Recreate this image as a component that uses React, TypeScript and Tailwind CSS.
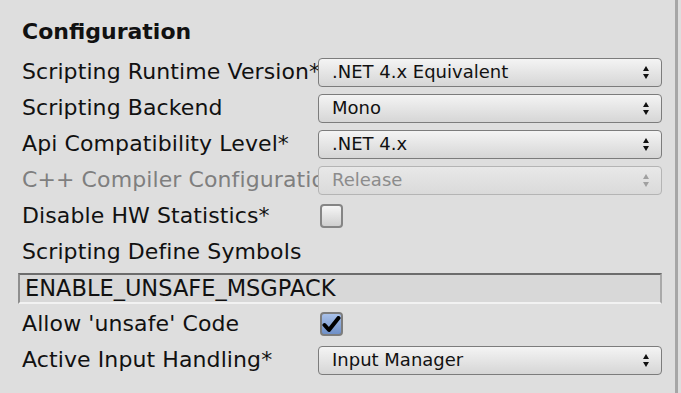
import React from "react";

const font = { fontFamily: '"DejaVu Sans", "Liberation Sans", sans-serif' };

function Arrows({ disabled }: { disabled?: boolean }) {
  const c = disabled ? "#a0a0a0" : "#111111";
  return (
    <svg width="6" height="13" viewBox="0 0 6 13" className="shrink-0">
      <path d="M3 0 L6 5 L0 5 Z" fill={c} />
      <path d="M0 8 L6 8 L3 13 Z" fill={c} />
    </svg>
  );
}

function Dropdown({ value, disabled }: { value: string; disabled?: boolean }) {
  return (
    <div
      className={
        "flex h-[29px] flex-1 items-center justify-between rounded-[4px] border pl-[13px] pr-[12px] text-[18px] " +
        (disabled
          ? "border-[#b4b4b4] bg-gradient-to-b from-[#e8e8e8] to-[#dadada] text-[#8c8c8c]"
          : "border-[#7c7c7c] bg-gradient-to-b from-[#f4f4f4] to-[#d6d6d6] text-[#111111]")
      }
    >
      <span className="leading-none">{value}</span>
      <Arrows disabled={disabled} />
    </div>
  );
}

function Checkbox({ checked }: { checked?: boolean }) {
  return (
    <div
      className={
        "ml-[2px] flex h-[24px] w-[23px] items-center justify-center rounded-[4px] border-2 " +
        (checked
          ? "border-[#7d7d7d] bg-gradient-to-b from-[#a9c1e9] to-[#6f90c8]"
          : "border-[#858585] bg-gradient-to-b from-[#f6f6f6] to-[#cfcfcf]")
      }
    >
      {checked && (
        <svg width="19" height="17" viewBox="0 0 19 17">
          <path d="M2.5 9 L7 14 L16.5 2" stroke="#000" strokeWidth="4" fill="none" strokeLinecap="round" strokeLinejoin="round" />
        </svg>
      )}
    </div>
  );
}

function Row({ label, disabled, children }: { label: string; disabled?: boolean; children?: React.ReactNode }) {
  return (
    <div className="flex h-[36px] items-center">
      <div
        className={
          "w-[300px] shrink-0 overflow-hidden whitespace-nowrap pl-[4px] text-[22px] leading-[36px] tracking-[0.1px] " +
          (disabled ? "text-[#7f7f7f]" : "text-[#111111]")
        }
      >
        {label}
      </div>
      <div className="flex flex-1 items-center">{children}</div>
    </div>
  );
}

export default function App() {
  return (
    <div className="flex h-[393px] w-[681px] bg-[#dedede]" style={font}>
      <div className="flex flex-1 flex-col pl-[18px] pr-[13px] pt-[14px]">
        <div className="h-[36px] pl-[4px] text-[22px] font-bold leading-[36px] text-[#111111]">Configuration</div>
        <div className="mt-[4px] flex flex-col">
          <Row label="Scripting Runtime Version*">
            <Dropdown value=".NET 4.x Equivalent" />
          </Row>
          <Row label="Scripting Backend">
            <Dropdown value="Mono" />
          </Row>
          <Row label="Api Compatibility Level*">
            <Dropdown value=".NET 4.x" />
          </Row>
          <Row label="C++ Compiler Configuration" disabled>
            <Dropdown value="Release" disabled />
          </Row>
          <Row label="Disable HW Statistics*">
            <Checkbox />
          </Row>
          <Row label="Scripting Define Symbols" />
          <div className="flex h-[36px] items-start pt-[3px]">
            <div className="flex h-[31px] flex-1 items-center border-2 border-b-[#f2f2f2] border-l-[#8e8e8e] border-r-[#a9a9a9] border-t-[#6c6c6c] bg-[#d8d8d8] pl-[5px] text-[22.5px] leading-none text-[#111111]">
              ENABLE_UNSAFE_MSGPACK
            </div>
          </div>
          <Row label="Allow 'unsafe' Code">
            <Checkbox checked />
          </Row>
          <Row label="Active Input Handling*">
            <Dropdown value="Input Manager" />
          </Row>
        </div>
      </div>
      <div className="w-[3px] bg-[#a6a6a6]" />
      <div className="w-[3px]" />
    </div>
  );
}
